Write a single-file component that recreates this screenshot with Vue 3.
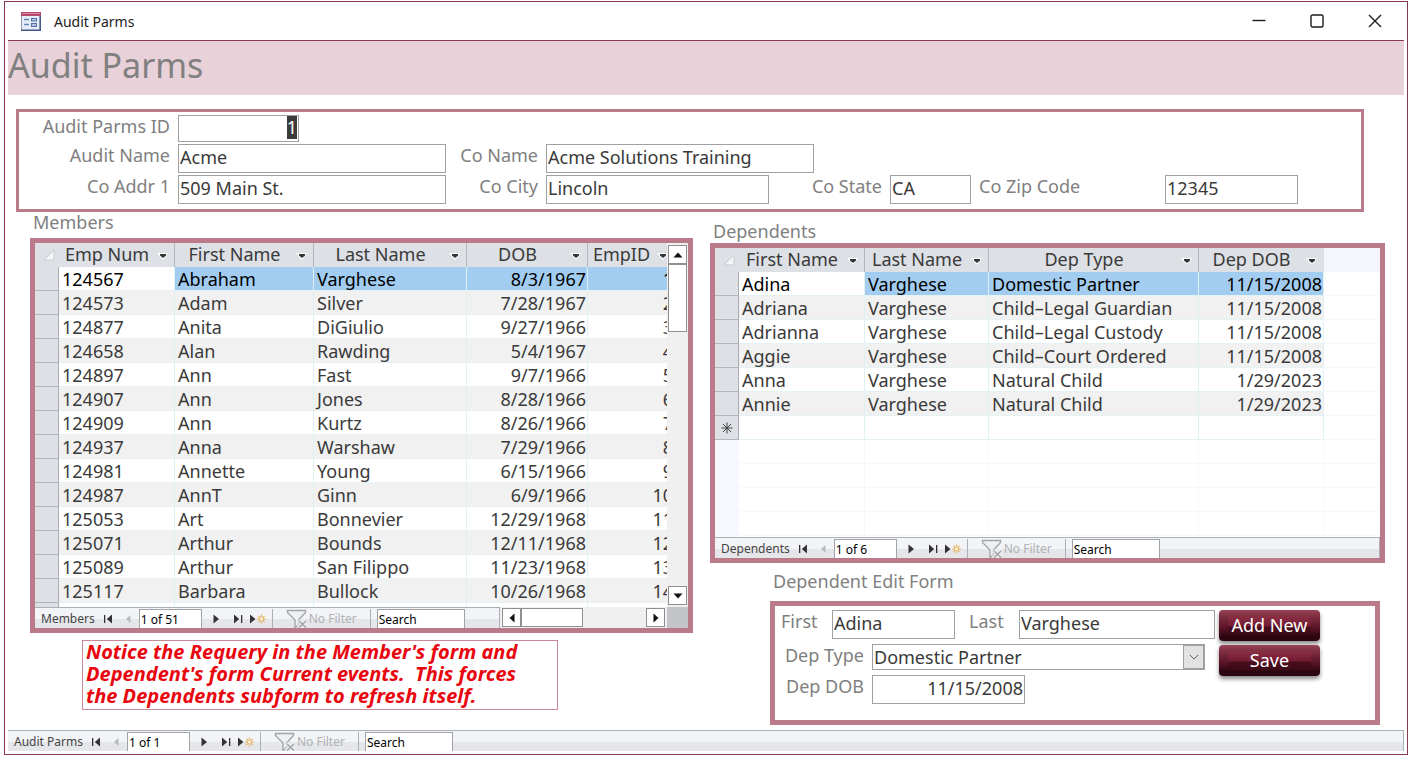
<script setup>
import { onMounted, ref } from 'vue'

const idField = ref(null)

const memberColumns = [
  { title: 'Emp Num', width: 'w-emp' },
  { title: 'First Name', width: 'w-first' },
  { title: 'Last Name', width: 'w-last' },
  { title: 'DOB', width: 'w-dob', numeric: true },
  { title: 'EmpID', width: 'w-id', numeric: true },
]

const members = [
  ['124567', 'Abraham', 'Varghese', '8/3/1967', '1'],
  ['124573', 'Adam', 'Silver', '7/28/1967', '2'],
  ['124877', 'Anita', 'DiGiulio', '9/27/1966', '3'],
  ['124658', 'Alan', 'Rawding', '5/4/1967', '4'],
  ['124897', 'Ann', 'Fast', '9/7/1966', '5'],
  ['124907', 'Ann', 'Jones', '8/28/1966', '6'],
  ['124909', 'Ann', 'Kurtz', '8/26/1966', '7'],
  ['124937', 'Anna', 'Warshaw', '7/29/1966', '8'],
  ['124981', 'Annette', 'Young', '6/15/1966', '9'],
  ['124987', 'AnnT', 'Ginn', '6/9/1966', '10'],
  ['125053', 'Art', 'Bonnevier', '12/29/1968', '11'],
  ['125071', 'Arthur', 'Bounds', '12/11/1968', '12'],
  ['125089', 'Arthur', 'San Filippo', '11/23/1968', '13'],
  ['125117', 'Barbara', 'Bullock', '10/26/1968', '14'],
]

const dependentColumns = [
  { title: 'First Name', width: 'w-dfirst' },
  { title: 'Last Name', width: 'w-dlast' },
  { title: 'Dep Type', width: 'w-dtype' },
  { title: 'Dep DOB', width: 'w-ddob', numeric: true },
]

const dependents = [
  ['Adina', 'Varghese', 'Domestic Partner', '11/15/2008'],
  ['Adriana', 'Varghese', 'Child–Legal Guardian', '11/15/2008'],
  ['Adrianna', 'Varghese', 'Child–Legal Custody', '11/15/2008'],
  ['Aggie', 'Varghese', 'Child–Court Ordered', '11/15/2008'],
  ['Anna', 'Varghese', 'Natural Child', '1/29/2023'],
  ['Annie', 'Varghese', 'Natural Child', '1/29/2023'],
]

onMounted(() => {
  idField.value.focus()
  idField.value.select()
})
</script>

<template>
  <svg class="defs" aria-hidden="true">
    <symbol id="i-first" viewBox="0 0 10 10"><path d="M1 1h1.300v8H1zM9 0.500v9L3.800 5z" fill="#333" /></symbol>
    <symbol id="i-prev" viewBox="0 0 10 10"><path d="M7.500 1v8L3 5z" fill="#b9bbbf" /></symbol>
    <symbol id="i-next" viewBox="0 0 10 10"><path d="M2.500 0.500v9L8 5z" fill="#333" /></symbol>
    <symbol id="i-last" viewBox="0 0 10 10"><path d="M8 1h1.300v8H8zM1 0.500v9L6.200 5z" fill="#333" /></symbol>
    <symbol id="i-new" viewBox="0 0 18 10">
      <path d="M1 0.500v9L6.500 5z" fill="#333" />
      <path d="M12.500 0.500v2M12.500 7.500v2M8 5h2M15 5h2M9.300 1.800l1.500 1.500M14.200 6.700l1.500 1.500M15.700 1.800l-1.500 1.500M10.800 6.700l-1.500 1.500" stroke="#e3b464" stroke-width="1.200" fill="none" />
      <circle cx="12.500" cy="5" r="2.100" fill="#fff3d6" stroke="#e3b464" />
    </symbol>
    <symbol id="i-filter" viewBox="0 0 22 19">
      <path d="M1.500 1.500h18v2l-7 7.500v5l-3.500 2.500V11l-7.500-7.500z" fill="#eef0f2" stroke="#a3a5a8" stroke-width="1.400" />
      <path d="M12.500 11.500l7.500 7M20 11.500l-7.500 7" stroke="#eef0f2" stroke-width="4" />
      <path d="M13 12l7 6.500M20 12l-7 6.500" stroke="#a3a5a8" stroke-width="1.600" />
    </symbol>
    <symbol id="i-down" viewBox="0 0 10 6"><path d="M0.500 0.500h9L5 5.500z" fill="#111" /></symbol>
    <symbol id="i-up" viewBox="0 0 10 6"><path d="M0.500 5.500h9L5 0.500z" fill="#111" /></symbol>
    <symbol id="i-menu" viewBox="0 0 12 9">
      <path d="M0 1h11l-5 7z" fill="#fff" /><path d="M3 2h6v1.500L6 6 3 3.500z" fill="#333" />
    </symbol>
  </svg>

  <div class="window">
    <header class="titlebar">
      <svg class="app-icon" viewBox="0 0 20 19" aria-hidden="true">
        <rect x="0.500" y="0.500" width="19" height="18" fill="#e6ecf8" stroke="#8d9abb" />
        <path d="M0 0h20v4H0z" fill="#b5486b" /><path d="M1 1h18v1H1z" fill="#d08aa0" />
        <path d="M19.200 4v15M0 18.200h20" stroke="#465a88" stroke-width="1.600" />
        <path d="M3 7.500h5M3 12.500h5" stroke="#6b82b5" stroke-width="1.500" />
        <rect x="10.500" y="6.500" width="5" height="2.500" fill="#b4c5e8" stroke="#5570a8" />
        <rect x="10.500" y="11.500" width="5" height="3" fill="#b4c5e8" stroke="#5570a8" />
      </svg>
      <span class="caption">Audit Parms</span>
      <button class="sys" aria-label="Minimize"><svg viewBox="0 0 14 14"><path d="M0.500 6.500h13" /></svg></button>
      <button class="sys" aria-label="Maximize"><svg viewBox="0 0 14 14"><rect x="1" y="1" width="12" height="12" rx="1.500" /></svg></button>
      <button class="sys" aria-label="Close"><svg viewBox="0 0 14 14"><path d="M1 1l12 12M13 1L1 13" /></svg></button>
    </header>

    <div class="band"><h1>Audit Parms</h1></div>

    <main>
      <section class="parms">
        <div class="row">
          <label class="l-main" for="parm-id">Audit Parms ID</label>
          <input id="parm-id" ref="idField" class="field f-id" value="1" />
        </div>
        <div class="row">
          <label class="l-main" for="parm-name">Audit Name</label>
          <input id="parm-name" class="field f-wide" value="Acme" />
          <label class="l-co" for="co-name">Co Name</label>
          <input id="co-name" class="field f-wide" value="Acme Solutions Training" />
        </div>
        <div class="row">
          <label class="l-main" for="co-addr">Co Addr 1</label>
          <input id="co-addr" class="field f-wide" value="509 Main St." />
          <label class="l-co" for="co-city">Co City</label>
          <input id="co-city" class="field f-city" value="Lincoln" />
          <label class="l-state" for="co-state">Co State</label>
          <input id="co-state" class="field f-state" value="CA" />
          <label class="l-zip" for="co-zip">Co Zip Code</label>
          <input id="co-zip" class="field f-zip" value="12345" />
        </div>
      </section>

      <div class="work">
        <div class="left">
          <h2 class="members-title">Members</h2>
          <section class="panel">
            <div class="grid-area members-area">
              <div class="sheet">
                <table>
                  <thead>
                    <tr>
                      <th class="corner"><svg viewBox="0 0 12 12"><path d="M11 1v10H1z" /></svg></th>
                      <th v-for="c in memberColumns" :key="c.title" :class="c.width">
                        <span>{{ c.title }}</span>
                        <button class="menu" :aria-label="c.title + ' options'"><svg><use href="#i-menu" /></svg></button>
                      </th>
                    </tr>
                  </thead>
                  <tbody>
                    <tr v-for="(m, r) in members" :key="m[0]" :class="{ current: r === 0 }">
                      <th class="selector"></th>
                      <td v-for="(v, i) in m" :key="i" :class="{ num: memberColumns[i].numeric }">{{ v }}</td>
                    </tr>
                    <tr>
                      <th class="selector"></th>
                      <td v-for="c in memberColumns" :key="c.title"></td>
                    </tr>
                  </tbody>
                </table>
              </div>
              <div class="vscroll">
                <button class="sb" aria-label="Scroll up"><svg><use href="#i-up" /></svg></button>
                <div class="vthumb"></div>
                <button class="sb bottom" aria-label="Scroll down"><svg><use href="#i-down" /></svg></button>
              </div>
            </div>
            <div class="foot">
              <nav class="recnav members-nav">
                <span>Members</span>
                <button class="go first" aria-label="First record"><svg><use href="#i-first" /></svg></button>
                <button class="go prev" aria-label="Previous record"><svg><use href="#i-prev" /></svg></button>
                <input class="pos" aria-label="Current record" value="1 of 51" />
                <button class="go next" aria-label="Next record"><svg><use href="#i-next" /></svg></button>
                <button class="go last" aria-label="Last record"><svg><use href="#i-last" /></svg></button>
                <button class="go new" aria-label="New record"><svg><use href="#i-new" /></svg></button>
                <button class="filter"><svg><use href="#i-filter" /></svg>No Filter</button>
                <input class="search" aria-label="Search" value="Search" />
              </nav>
              <div class="hscroll">
                <button class="sb" aria-label="Scroll left"><svg viewBox="0 0 6 10"><path d="M5.500 0.500v9L0.500 5z" fill="#111" /></svg></button>
                <div class="hthumb"></div>
                <button class="sb end" aria-label="Scroll right"><svg viewBox="0 0 6 10"><path d="M0.500 0.500v9L5.500 5z" fill="#111" /></svg></button>
              </div>
              <div class="size-box"></div>
            </div>
          </section>
          <p class="notice">Notice the Requery in the Member's form and<br />Dependent's form Current events.&nbsp; This forces<br />the Dependents subform to refresh itself.</p>
        </div>

        <div class="right">
          <h2 class="dependents-title">Dependents</h2>
          <section class="panel">
            <div class="grid-area dependents-area">
              <table class="fill">
                <thead>
                  <tr>
                    <th class="corner"><svg viewBox="0 0 12 12"><path d="M11 1v10H1z" /></svg></th>
                    <th v-for="c in dependentColumns" :key="c.title" :class="c.width">
                      <span>{{ c.title }}</span>
                      <button class="menu" :aria-label="c.title + ' options'"><svg><use href="#i-menu" /></svg></button>
                    </th>
                    <td class="rest"></td>
                  </tr>
                </thead>
                <tbody>
                  <tr v-for="(d, r) in dependents" :key="d[0]" :class="{ current: r === 0 }">
                    <th class="selector"></th>
                    <td v-for="(v, i) in d" :key="i" :class="{ num: dependentColumns[i].numeric }">{{ v }}</td>
                    <td class="rest"></td>
                  </tr>
                  <tr class="blank">
                    <th class="selector">
                      <svg viewBox="0 0 12 12"><path d="M6 0.500v11M0.500 6h11M2 2l8 8M10 2l-8 8" stroke="#444" /></svg>
                    </th>
                    <td v-for="c in dependentColumns" :key="c.title"></td>
                    <td class="rest"></td>
                  </tr>
                  <tr v-for="n in 5" :key="'e' + n" class="empty">
                    <th></th>
                    <td v-for="c in dependentColumns" :key="c.title"></td>
                    <td class="rest"></td>
                  </tr>
                </tbody>
              </table>
            </div>
            <nav class="recnav">
              <span>Dependents</span>
              <button class="go first" aria-label="First record"><svg><use href="#i-first" /></svg></button>
              <button class="go prev" aria-label="Previous record"><svg><use href="#i-prev" /></svg></button>
              <input class="pos" aria-label="Current record" value="1 of 6" />
              <button class="go next" aria-label="Next record"><svg><use href="#i-next" /></svg></button>
              <button class="go last" aria-label="Last record"><svg><use href="#i-last" /></svg></button>
              <button class="go new" aria-label="New record"><svg><use href="#i-new" /></svg></button>
              <button class="filter"><svg><use href="#i-filter" /></svg>No Filter</button>
              <input class="search" aria-label="Search" value="Search" />
            </nav>
          </section>

          <h2 class="edit-title">Dependent Edit Form</h2>
          <section class="panel edit">
            <div class="edit-fields">
              <div class="row">
                <label class="l-first" for="dep-first">First</label>
                <input id="dep-first" class="field f-first" value="Adina" />
                <label class="l-last" for="dep-last">Last</label>
                <input id="dep-last" class="field f-last" value="Varghese" />
              </div>
              <div class="row">
                <label class="l-dep" for="dep-type">Dep Type</label>
                <div class="combo">
                  <select id="dep-type"><option>Domestic Partner</option></select>
                  <span class="combo-arrow"><svg viewBox="0 0 12 7"><path d="M1 1l5 5 5-5" /></svg></span>
                </div>
              </div>
              <div class="row">
                <label class="l-dep" for="dep-dob">Dep DOB</label>
                <input id="dep-dob" class="field f-dob" value="11/15/2008" />
              </div>
            </div>
            <div class="actions">
              <button class="cmd">Add New</button>
              <button class="cmd">Save</button>
            </div>
          </section>
        </div>
      </div>
    </main>

    <nav class="recnav form-nav">
      <span>Audit Parms</span>
      <button class="go first" aria-label="First record"><svg><use href="#i-first" /></svg></button>
      <button class="go prev" aria-label="Previous record"><svg><use href="#i-prev" /></svg></button>
      <input class="pos" aria-label="Current record" value="1 of 1" />
      <button class="go next" aria-label="Next record"><svg><use href="#i-next" /></svg></button>
      <button class="go last" aria-label="Last record"><svg><use href="#i-last" /></svg></button>
      <button class="go new" aria-label="New record"><svg><use href="#i-new" /></svg></button>
      <button class="filter"><svg><use href="#i-filter" /></svg>No Filter</button>
      <input class="search" aria-label="Search" value="Search" />
    </nav>
  </div>
</template>

<style>
body {
  background: #fff;
}
</style>

<style scoped>
* {
  box-sizing: border-box;
}
.defs {
  display: none;
}
.window,
.window input,
.window select,
.window button {
  font-family: 'Noto Sans', 'Open Sans', sans-serif;
  font-size: 18px;
}
.window {
  margin: 1px 4px 5px;
  padding: 0 3px 3px;
  border: 1px solid #8a3a50;
  color: #3a3a3a;
  background: #fff;
}
button {
  padding: 0;
  border: 0;
  background: none;
}
button,
.row,
.titlebar,
.recnav {
  display: flex;
  align-items: center;
}
button {
  justify-content: center;
}
svg {
  display: block;
  flex: none;
}
h1,
h2,
p {
  margin: 0;
  font-weight: 400;
}

.titlebar {
  height: 39px;
  padding-left: 13px;
  border-bottom: 1px solid #8a3a50;
}
.app-icon {
  width: 20px;
  height: 19px;
}
.caption {
  flex: 1;
  margin-left: 13px;
  font-size: 14px;
  color: #222;
}
.sys {
  width: 58px;
  height: 38px;
}
.sys svg {
  width: 14px;
  height: 14px;
  fill: none;
  stroke: #1c1c1c;
  stroke-width: 1.4;
}
.band {
  height: 54px;
  background: #e8d1d8;
}
.band h1 {
  font-size: 34px;
  line-height: 49px;
  color: #808080;
}

.parms {
  display: flex;
  flex-direction: column;
  gap: 2px;
  margin: 14px 40px 0 8px;
  padding: 3px 0 5px;
  border: 3px solid #bb7a89;
}
.row {
  gap: 8px;
  align-items: flex-start;
}
label,
h2 {
  font-size: 18px;
  line-height: 22px;
  color: #808080;
  white-space: nowrap;
}
.field {
  height: 29px;
  padding: 0 1px 3px;
  border: 1px solid #a0a0a0;
  border-radius: 0;
  color: #3a3a3a;
  background: #fff;
  outline: none;
}
.field::selection {
  color: #fff;
  background: #3c3c3c;
}
.l-main {
  width: 151px;
  text-align: right;
}
.l-co {
  width: 84px;
  text-align: right;
}
.l-state {
  width: 105px;
  text-align: right;
}
.l-zip {
  width: 178px;
}
.f-id {
  width: 121px;
  height: 27px;
  text-align: right;
}
.f-wide {
  width: 268px;
}
.f-city {
  width: 223px;
}
.f-state {
  width: 81px;
}
.f-zip {
  width: 133px;
}

.work {
  display: grid;
  grid-template-columns: minmax(0, 663fr) minmax(0, 675fr);
  gap: 17px;
  margin: 0 19px 0 22px;
}
.members-title {
  padding: 0 0 6px 3px;
  line-height: 20px;
}
.dependents-title {
  padding: 8px 0 1px 3px;
}
.edit-title {
  padding: 7px 0 9px 63px;
}
.panel {
  border: 5px solid #bb7a89;
}
.grid-area {
  display: flex;
  overflow: hidden;
}
.members-area {
  height: 364px;
}
.dependents-area {
  height: 289px;
}
.sheet {
  flex: 1;
  min-width: 0;
  overflow: hidden;
}
table {
  width: 640px;
  table-layout: fixed;
  border-collapse: separate;
  border-spacing: 0;
}
.fill {
  width: 100%;
}
th,
td {
  height: 24px;
  padding: 0;
  font-weight: 400;
  white-space: nowrap;
  overflow: hidden;
}
thead th {
  position: relative;
  padding: 0 19px 2px 0;
  line-height: 22px;
  background: #dde0e5;
  border-right: 1px solid #b3b6bb;
}
thead th:last-of-type {
  border-right-color: #dde0e5;
}
thead .corner {
  width: 24px;
  padding: 0 0 0 8px;
  border-right-color: #dde0e5;
}
.corner svg {
  width: 12px;
  height: 12px;
  fill: #f4f5f7;
  stroke: #c9ccd1;
}
.menu {
  position: absolute;
  right: 5px;
  top: 9px;
}
.menu svg {
  width: 12px;
  height: 9px;
}
.w-emp {
  width: 116px;
}
.w-first {
  width: 139px;
}
.w-last {
  width: 153px;
}
.w-dob {
  width: 121px;
}
.w-id {
  width: 87px;
}
.w-dfirst {
  width: 126px;
}
.w-dlast {
  width: 124px;
}
.w-dtype {
  width: 210px;
}
.w-ddob {
  width: 125px;
}
tbody td {
  padding: 1px 1px 0 3px;
  line-height: 22px;
  border-right: 1px solid #e0f1f3;
  border-bottom: 1px solid #e4f2f3;
}
tbody tr:nth-child(even) td {
  background: #f1f1f1;
}
tbody .selector {
  background: #dde0e5;
  border-right: 1px solid #a9acb1;
  border-bottom: 1px solid #b3b6bb;
}
.selector svg {
  width: 12px;
  height: 12px;
  margin: 0 auto;
}
.num {
  text-align: right;
}
.current td {
  color: #000;
  background: #a3cdf0;
}
.current td:nth-child(2),
.blank td {
  background: #fff;
}
thead .rest {
  background: #f5f6fd;
}
tbody tr .rest,
tbody tr:nth-child(even) .rest,
tbody .empty td,
tbody .empty:nth-child(even) td {
  background: #fff;
  border-color: #f7f8fb;
}
tbody .rest {
  border-right: 0;
}
.empty th {
  background: #f7f8fd;
}

.vscroll {
  display: flex;
  flex-direction: column;
  align-items: center;
  width: 21px;
  padding: 2px 0;
  background: #f0f0f0;
}
.sb {
  flex: none;
  width: 19px;
  height: 19px;
  border: 1px solid #8f8f8f;
  background: #fff;
}
.vscroll .sb svg {
  width: 10px;
  height: 6px;
}
.vthumb {
  width: 19px;
  height: 68px;
  border: 1px solid #8f8f8f;
  background: #fff;
}
.bottom {
  margin-top: auto;
}
.foot {
  display: flex;
}
.hscroll {
  display: flex;
  align-items: center;
  flex: 1;
  padding: 0 2px;
  background: #f0f0f0;
}
.hscroll .sb svg {
  width: 6px;
  height: 10px;
}
.hthumb {
  width: 62px;
  height: 19px;
  border: 1px solid #8f8f8f;
  background: #fff;
}
.end {
  margin-left: auto;
}
.size-box {
  width: 21px;
  background: #c4c5c9;
}

.recnav {
  height: 21px;
  padding: 1px 0 0 6px;
  overflow: hidden;
  border: solid #a9b0b8;
  border-width: 1px 1px 0 0;
  color: #444;
  background: linear-gradient(#f3f4f7 55%, #e4e6ea 55%);
}
.recnav,
.window .recnav input,
.window .recnav button {
  font-size: 12px;
}
.members-nav {
  width: 465px;
}
.go svg {
  width: 10px;
  height: 10px;
}
.first {
  margin-left: 8px;
}
.prev {
  margin: 0 6px 0 10px;
}
.pos,
.search {
  align-self: flex-end;
  height: 19px;
  padding: 0 1px;
  border: solid #a0a3a8;
  border-width: 1px 1px 0;
  border-radius: 0;
  color: #000;
  background: #fff;
}
.pos {
  width: 63px;
}
.search {
  width: 88px;
  margin-left: 6px;
}
.next {
  margin: 0 12px 0 9px;
}
.new {
  margin: 0 5px 0 6px;
}
.new svg {
  width: 18px;
}
.filter {
  gap: 1px;
  width: 99px;
  height: 20px;
  border: solid #a9b0b8;
  border-width: 0 1px;
  color: #b0b1b4;
}
.filter svg {
  width: 22px;
  height: 19px;
}

.notice {
  width: 476px;
  margin: 7px 0 0 52px;
  padding: 0 3px 2px;
  border: 1px solid #c98a97;
  font-size: 20px;
  font-weight: 700;
  font-style: italic;
  line-height: 22px;
  white-space: nowrap;
  color: #e8060f;
}

.edit {
  display: flex;
  gap: 4px;
  margin: 0 5px 5px 60px;
  padding: 4px 0 16px 6px;
}
.edit-fields {
  display: flex;
  flex-direction: column;
  gap: 5px;
}
.edit .row {
  gap: 0;
}
.edit label {
  line-height: 23px;
}
.l-first {
  width: 51px;
}
.l-last {
  width: 64px;
  padding-left: 14px;
}
.f-first {
  width: 123px;
}
.f-last {
  width: 196px;
}
.l-dep {
  width: 91px;
  padding-right: 8px;
  text-align: right;
}
.f-dob {
  width: 153px;
  text-align: right;
}
.combo {
  position: relative;
  width: 333px;
}
.combo select {
  display: block;
  width: 100%;
  height: 26px;
  padding: 0 22px 2px 1px;
  border: 1px solid #a0a0a0;
  border-radius: 0;
  color: #3a3a3a;
  background: #fff;
  appearance: none;
}
.combo-arrow {
  position: absolute;
  top: 1px;
  right: 1px;
  bottom: 1px;
  display: flex;
  align-items: center;
  justify-content: center;
  width: 21px;
  border: 1px solid #a0a0a0;
  background: #e2e2e2;
  pointer-events: none;
}
.combo-arrow svg {
  width: 10px;
  height: 6px;
  fill: none;
  stroke: #444;
}
.actions {
  display: flex;
  flex-direction: column;
  gap: 4px;
}
.cmd {
  width: 101px;
  height: 31px;
  border: solid transparent;
  border-width: 6px 9px;
  border-radius: 4px;
  color: #fff;
  line-height: 19px;
  white-space: nowrap;
  background:
    linear-gradient(#8c2f45, #741c33 50%, #4a0d1e 60%, #3c0917) padding-box,
    linear-gradient(#964456, #7a2a3e 25%, #571226 60%, #2c0510 85%) border-box;
  box-shadow: 0 3px 4px rgba(0, 0, 0, 0.45);
}
</style>
